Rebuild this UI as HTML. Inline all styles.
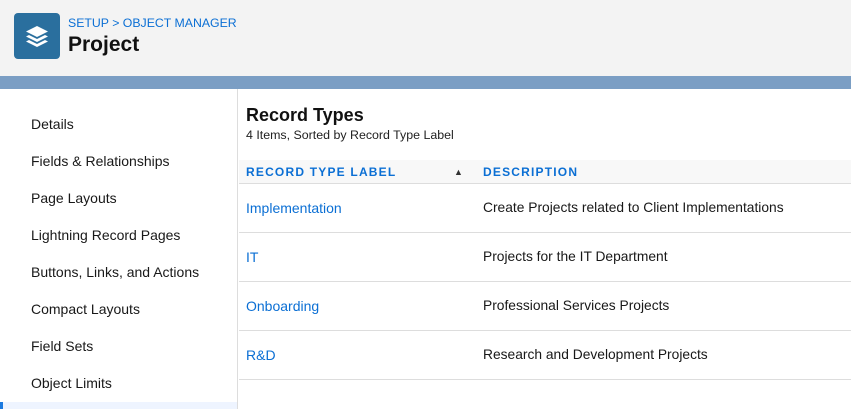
<!DOCTYPE html>
<html><head><style>
*{margin:0;padding:0;box-sizing:border-box}
body{width:851px;height:409px;overflow:hidden;background:#fff;font-family:"Liberation Sans",sans-serif;position:relative}
.hdr{position:absolute;left:0;top:0;width:851px;height:76px;background:#f3f3f3}
.icon{position:absolute;left:14px;top:13px;width:46px;height:46px;border-radius:4px;background:#2a6f9e}
.bc{position:absolute;left:68px;top:16px;font-size:12.3px;color:#0b6fd4}
.title{position:absolute;left:68px;top:33px;font-size:21px;font-weight:bold;color:#111}
.band{position:absolute;left:0;top:76px;width:851px;height:13px;background:#7b9ec4}
.side{position:absolute;left:0;top:89px;width:238px;height:320px;border-right:1px solid #ddd}
.side div{position:absolute;left:31px;font-size:14px;color:#181818}
.sel{position:absolute;left:0;top:402px;width:237px;height:7px;background:#eef4ff;border-left:3px solid #1b7ae0}
.h{position:absolute;left:246px;top:105px;font-size:18px;font-weight:bold;color:#111}
.sub{position:absolute;left:246px;top:128px;font-size:12.4px;color:#222}
.th{position:absolute;left:239px;top:160px;width:612px;height:24px;background:#f8f8f8;border-bottom:1px solid #ddd}
.th span{position:absolute;top:5px;font-size:12px;font-weight:bold;letter-spacing:1.2px;color:#0b6fd4}
.row{position:absolute;left:239px;width:612px;height:49px;border-bottom:1px solid #ddd}
.row a{position:absolute;left:7px;top:16px;font-size:14px;color:#0b6fd4}
.row span{position:absolute;left:244px;top:16px;font-size:13.8px;color:#181818}
</style></head><body>
<div class="hdr"></div>
<div class="icon"><svg width="46" height="46" viewBox="0 0 46 46"><g fill="#fff"><path d="M23 13l11 5.5-11 5.5-11-5.5z"/><path d="M12 23.5l3-1.5 8 4 8-4 3 1.5-11 5.5z"/><path d="M12 28.5l3-1.5 8 4 8-4 3 1.5-11 5.5z"/></g></svg></div>
<div class="bc">SETUP &gt; OBJECT MANAGER</div>
<div class="title">Project</div>
<div class="band"></div>
<div class="side">
<div style="top:27px">Details</div>
<div style="top:64px">Fields &amp; Relationships</div>
<div style="top:101px">Page Layouts</div>
<div style="top:138px">Lightning Record Pages</div>
<div style="top:175px">Buttons, Links, and Actions</div>
<div style="top:212px">Compact Layouts</div>
<div style="top:249px">Field Sets</div>
<div style="top:286px">Object Limits</div>
</div>
<div class="sel"></div>
<div class="h">Record Types</div>
<div class="sub">4 Items, Sorted by Record Type Label</div>
<div class="th"><span style="left:7px">RECORD TYPE LABEL</span><span style="left:215px;font-size:9px;top:7px;color:#333">▲</span><span style="left:244px">DESCRIPTION</span></div>
<div class="row" style="top:184px"><a>Implementation</a><span>Create Projects related to Client Implementations</span></div>
<div class="row" style="top:233px"><a>IT</a><span>Projects for the IT Department</span></div>
<div class="row" style="top:282px"><a>Onboarding</a><span>Professional Services Projects</span></div>
<div class="row" style="top:331px"><a>R&amp;D</a><span>Research and Development Projects</span></div>
</body></html>
